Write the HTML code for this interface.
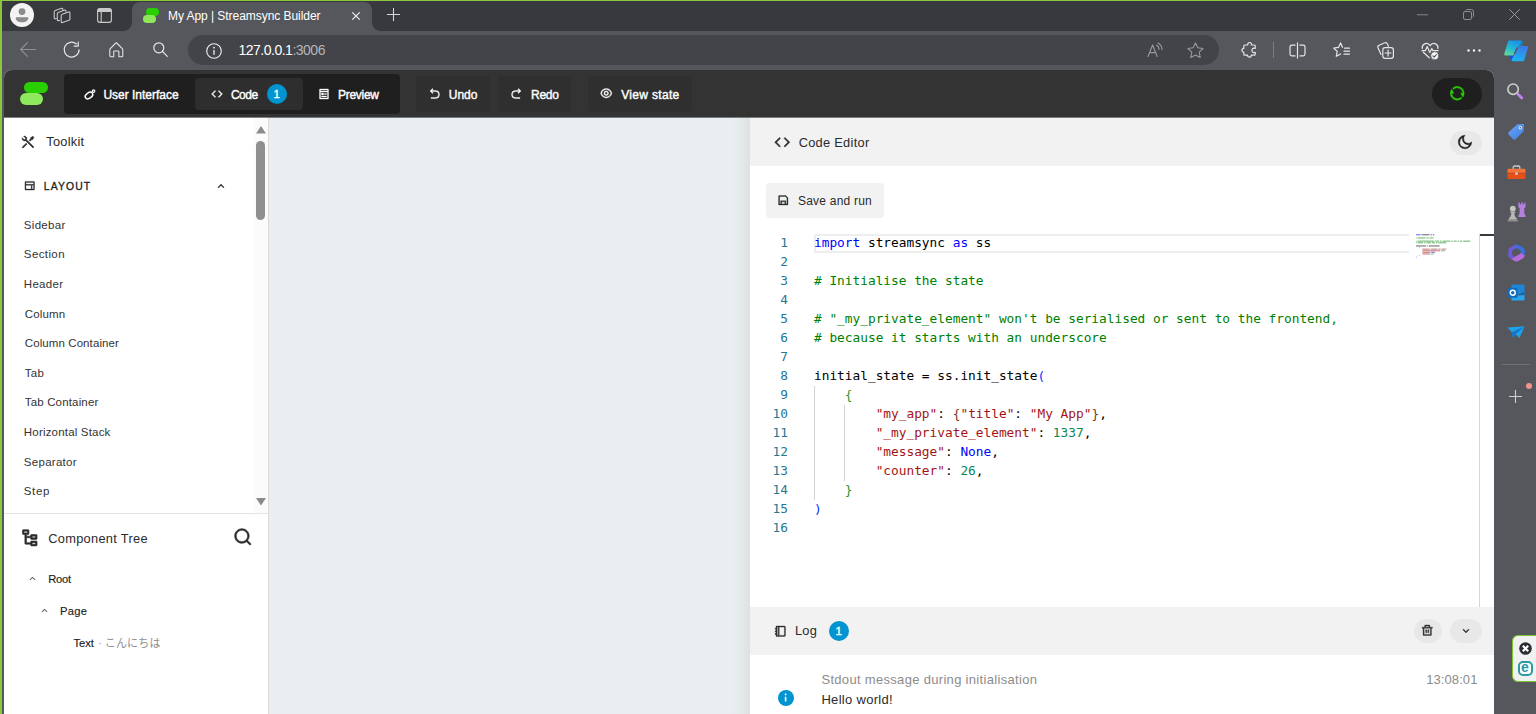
<!DOCTYPE html>
<html lang="en">
<head>
<meta charset="utf-8">
<title>My App | Streamsync Builder</title>
<style>
*{box-sizing:border-box;margin:0;padding:0}
html,body{width:1536px;height:714px;overflow:hidden}
body{position:relative;background:#8cc63f;font-family:"Liberation Sans","Noto Sans CJK JP",sans-serif;font-size:12px;color:#000}
.abs{position:absolute}
svg{display:block;overflow:visible}
/* ---------- browser chrome ---------- */
#chrome{position:absolute;left:2px;top:1px;width:1534px;height:713px;background:#56575c}
#tabbar{position:absolute;left:0;top:0;width:1534px;height:30px;background:#38393d}
#tab{position:absolute;left:130px;top:1px;width:240px;height:29px;background:#56575c;border-radius:8px 8px 0 0}
#tab:before,#tab:after{content:"";position:absolute;bottom:0;width:8px;height:8px}
#tab:before{left:-8px;background:radial-gradient(circle at 0 0,transparent 7.5px,#56575c 8px)}
#tab:after{right:-8px;background:radial-gradient(circle at 100% 0,transparent 7.5px,#56575c 8px)}
#tabtitle{position:absolute;left:166px;top:6.5px;font-size:12px;line-height:16px;color:#fff;white-space:nowrap;letter-spacing:-.05px}
#urlpill{position:absolute;left:186px;top:34px;width:1031px;height:30px;border-radius:15px;background:#434449}
#url{position:absolute;left:236.5px;top:41px;font-size:14px;line-height:16px;color:#fff;white-space:nowrap;letter-spacing:-.5px}
#url span{color:#b4b5b8}
/* ---------- app ---------- */
#app{position:absolute;left:4px;top:70px;width:1490px;height:644px;border-radius:8px 8px 0 0;overflow:hidden;background:#e9eef1}
#pc{position:absolute;left:-4px;top:-70px;width:1536px;height:714px}
#pc div,#pc svg{position:absolute}
#pc .tx{white-space:nowrap;line-height:1}
#pc span{position:static}
#topbar{left:4px;top:70px;width:1490px;height:47px;background:#333}
#tbedge{left:4px;top:117px;width:1490px;height:1px;background:linear-gradient(90deg,#808080 0,#808080 265px,#767879 265px,#767879 746px,#7a7a7a 746px)}
#modegroup{left:64px;top:74px;width:336px;height:40px;background:#1f1f1f;border-radius:4px}
.tbtn{border-radius:4px;background:#2f2f2f}
#left{left:4px;top:118px;width:265px;height:596px;background:#fff;border-right:1px solid #d9d9d9}
#strack{left:253px;top:118px;width:15px;height:395px;background:#fbfbfb}
#sthumb{left:256px;top:141px;width:9px;height:79px;border-radius:4.5px;background:#8f8f8f}
#ldiv{left:4px;top:513px;width:264px;height:1px;background:#e4e4e4}
#rshadow{left:732px;top:118px;width:18px;height:596px;background:linear-gradient(90deg,rgba(0,0,0,0),rgba(0,0,0,.02) 50%,rgba(0,0,0,.055))}
#right{left:750px;top:118px;width:744px;height:596px;background:#fff}
.phead{left:750px;width:744px;height:48px;background:#f2f2f2}
.pill{background:#e8e8e8;border-radius:12px;height:24px}
#savebtn{left:766px;top:183px;width:118px;height:35px;border-radius:4px;background:#f2f2f2}
.badge{width:20px;height:20px;border-radius:10px;background:#0094d1;color:#fff;font-size:11.5px;line-height:20px;text-align:center;-webkit-text-stroke:.35px #fff}
/* code */
#curline{left:814px;top:234px;width:595px;height:19px;border:2px solid #eee;border-right:none}
#code{left:814px;top:233.3px;font-family:"DejaVu Sans Mono","Liberation Mono",monospace;font-size:12.8px;line-height:19px;white-space:pre;color:#000}
#lnum{left:750px;top:233.3px;width:38px;text-align:right;font-family:"DejaVu Sans Mono","Liberation Mono",monospace;font-size:12.8px;line-height:19px;color:#237893;white-space:pre}
#code div,#lnum div{position:static}
.k{color:#00f}.c{color:#008000}.s{color:#a31515}.n{color:#098658}.b1{color:#0431fa}.b2{color:#319331}.b3{color:#7b3814}
.guide{width:1px;background:#d3d3d3}
#ruler{left:1479px;top:234px;width:1px;height:373px;background:#d6d6d6}
#rulercur{left:1480px;top:234px;width:14px;height:2px;background:#3a3a3a}

</style>
</head>
<body>
<div id="chrome">
  <div id="tabbar"></div>
  <div id="tab"></div>
  <!-- profile -->
  <svg class="abs" style="left:8px;top:2px" width="24" height="24" viewBox="0 0 24 24"><circle cx="12" cy="12" r="12" fill="#f3f3f3"/><circle cx="12" cy="8.6" r="3.4" fill="#8b8b8b"/><path d="M6.3 14.3h11.4a0.6 0.6 0 0 1 .6.6c0 2.6-2.8 4.3-6.3 4.3s-6.300-1.700-6.300-4.300a.6.6 0 0 1 .6-.6z" fill="#8b8b8b"/></svg>
  <!-- workspaces -->
  <svg class="abs" style="left:49px;top:3px" width="21" height="21" viewBox="0 0 21 21" fill="none" stroke="#c9c9cb" stroke-width="1.100" stroke-linejoin="round" stroke-linecap="round"><path d="M5.300 14.500 4.400 14.800a.9.900 0 0 1-1.200-.9V8a1.500 1.500 0 0 1 1-1.400l6.400-2.300a.9.900 0 0 1 1.200.9v1"/><path d="M8.500 16.300 7.500 16.600a.9.900 0 0 1-1.200-.9V9.800a1.500 1.500 0 0 1 1-1.400l6.400-2.300a.9.900 0 0 1 1.200.9v1"/><path d="M11.200 10.200l6.500-2.300a.9.900 0 0 1 1.200.9v6.100a1.500 1.500 0 0 1-1 1.400l-6.500 2.300a.9.900 0 0 1-1.200-.9v-6.100a1.500 1.500 0 0 1 1-1.400z"/></svg>
  <!-- tab actions -->
  <svg class="abs" style="left:94.500px;top:6.800px" width="15" height="15" viewBox="0 0 15 15" fill="none" stroke="#c9c9cb" stroke-width="1.100"><rect x=".6" y=".6" width="13.800" height="13.800" rx="2.300"/><path d="M4.200 3.600v10.800"/><path d="M.6 4V2.900A2.300 2.300 0 0 1 2.900.6h9.200a2.300 2.300 0 0 1 2.300 2.300V4z" fill="#c9c9cb" stroke="none"/></svg>
  <!-- favicon -->
  <div class="abs" style="left:144px;top:6.500px;width:13px;height:8px;border-radius:4px;background:#29cf00"></div>
  <div class="abs" style="left:141px;top:14px;width:13px;height:8px;border-radius:4px;background:#8ee85a"></div>
  <div id="tabtitle">My App | Streamsync Builder</div>
  <!-- tab close -->
  <svg class="abs" style="left:350px;top:11px" width="8" height="8" viewBox="0 0 8 8" fill="none" stroke="#f0f0f0" stroke-width="1.200"><path d="M.3.300l7.400 7.400M7.700.300L.3 7.700"/></svg>
  <!-- new tab -->
  <svg class="abs" style="left:384.500px;top:7px" width="13" height="13" viewBox="0 0 13 13" fill="none" stroke="#d6d6d8" stroke-width="1.100"><path d="M6.500 0v13M0 6.500h13"/></svg>
  <!-- window controls -->
  <svg class="abs" style="left:1415px;top:13px" width="11" height="2" viewBox="0 0 11 2"><path d="M0 .8h11" stroke="#85868a" stroke-width="1"/></svg>
  <svg class="abs" style="left:1461px;top:8px" width="11" height="11" viewBox="0 0 11 11" fill="none" stroke="#8b8c90" stroke-width="1"><rect x=".5" y="2.500" width="8" height="8" rx="1.500"/><path d="M2.700 1.300a1.500 1.500 0 0 1 1.300-.8h4.500a2 2 0 0 1 2 2v4.500a1.500 1.500 0 0 1-.8 1.300"/></svg>
  <svg class="abs" style="left:1507px;top:7.800px" width="11" height="11" viewBox="0 0 11 11" fill="none" stroke="#9a9b9f" stroke-width="1"><path d="M.3.300l10.400 10.400M10.700.300L.3 10.700"/></svg>
  <!-- nav icons -->
  <svg class="abs" style="left:18px;top:41px" width="16" height="15" viewBox="0 0 16 15" fill="none" stroke="#8f9094" stroke-width="1.100" stroke-linecap="round" stroke-linejoin="round"><path d="M15.500 7.500H.8M7.500.600L.6 7.500l6.900 6.900"/></svg>
  <svg class="abs" style="left:61.200px;top:39.800px" width="17.400" height="17.400" viewBox="0 0 17 17" fill="none" stroke="#e6e6e7" stroke-width="1.200" stroke-linecap="round" stroke-linejoin="round"><path d="M15.700 8.600a7.300 7.300 0 1 1-2.600-5.700"/><path d="M14.900 1v4h-4"/></svg>
  <svg class="abs" style="left:106.700px;top:40.700px" width="14.600" height="15.600" preserveAspectRatio="none" viewBox="0 0 16 16" fill="none" stroke="#e6e6e7" stroke-width="1.150" stroke-linejoin="round"><path d="M.9 7.300 7.200 1.300a1.200 1.200 0 0 1 1.600 0l6.300 6v6.800a1 1 0 0 1-1 1h-3.300v-5a.8.800 0 0 0-.8-.8H6a.8.800 0 0 0-.8.800v5H1.900a1 1 0 0 1-1-1z"/></svg>
  <svg class="abs" style="left:151px;top:41.300px" width="15" height="15" viewBox="0 0 15 15" fill="none" stroke="#e6e6e7" stroke-width="1.200" stroke-linecap="round"><circle cx="5.800" cy="5.800" r="5"/><path d="M9.500 9.500l4.800 4.800"/></svg>
  <div id="urlpill"></div>
  <svg class="abs" style="left:204px;top:41.500px" width="16" height="16" viewBox="0 0 16 16" fill="none" stroke="#f0f0f0" stroke-width="1.100"><circle cx="8" cy="8" r="7.300"/><path d="M8 7v4.800" stroke-width="1.300"/><circle cx="8" cy="4.700" r=".9" fill="#f0f0f0" stroke="none"/></svg>
  <div id="url">127.0.0.1<span>:3006</span></div>
  <!-- read aloud -->
  <svg class="abs" style="left:1145px;top:41px" width="18" height="16" viewBox="0 0 18 16" fill="none" stroke="#98999d" stroke-width="1.100" stroke-linecap="round" stroke-linejoin="round"><path d="M1 14.500 5.600 3l4.600 11.500M2.600 10.600h6"/><path d="M9.500 3.200a4.500 4.500 0 0 1 2.500 4.300M11 .9a7.500 7.500 0 0 1 4 6.700"/></svg>
  <!-- star -->
  <svg class="abs" style="left:1184.500px;top:41px" width="17" height="17" viewBox="0 0 17 17" fill="none" stroke="#98999d" stroke-width="1.100" stroke-linejoin="round"><path d="M8.500.9l2.300 4.900 5.300.7-3.900 3.700 1 5.300-4.700-2.600-4.700 2.600 1-5.300L.9 6.500l5.300-.7z"/></svg>
  <!-- extensions -->
  <svg class="abs" style="left:1238px;top:40px" width="17" height="18" viewBox="0 0 17 18" fill="none" stroke="#e6e6e7" stroke-width="1.200" stroke-linejoin="round"><path d="M4.800 4H7.800A1.900 1.900 0 1 1 11.400 4H14.200a1 1 0 0 1 1 1V7.500A2.200 2.200 0 1 0 15.200 11.300V13.200a1 1 0 0 1-1 1H11.300A1.900 1.900 0 1 1 7.500 14.200H4.800a1 1 0 0 1-1-1V11.200A1.900 1.900 0 1 1 3.800 7.400V5a1 1 0 0 1 1-1z"/></svg>
  <div class="abs" style="left:1270.500px;top:41px;width:1px;height:16px;background:#7c7d81"></div>
  <!-- split screen -->
  <svg class="abs" style="left:1286.500px;top:40.500px" width="17" height="17" viewBox="0 0 17 17" fill="none" stroke="#e6e6e7" stroke-width="1.200"><path d="M6.500 3.200H2.800a1.800 1.800 0 0 0-1.800 1.800v7a1.800 1.800 0 0 0 1.800 1.800h3.700M10.500 3.200h3.700a1.800 1.800 0 0 1 1.800 1.800v7a1.800 1.800 0 0 1-1.800 1.800h-3.700M8.500.5v16"/></svg>
  <!-- favorites -->
  <svg class="abs" style="left:1331px;top:41px" width="18" height="16" viewBox="0 0 18 16" fill="none" stroke="#e6e6e7" stroke-width="1.200" stroke-linejoin="round" stroke-linecap="round"><path d="M9.500 5.300 7.600.9 5.500 5.400l-4.800.6 3.500 3.400-.9 4.900 4.300-2.400"/><path d="M11.500 6.200h5M11 9.200h5.500M11 12.200h5.500"/></svg>
  <!-- collections -->
  <svg class="abs" style="left:1375px;top:40.500px" width="18" height="18" viewBox="0 0 18 18" fill="none" stroke="#e6e6e7" stroke-width="1.200" stroke-linejoin="round" stroke-linecap="round"><path d="M4 12.500 1 5.800a2 2 0 0 1 1.100-2.600l5.700-2.400a2 2 0 0 1 2.600 1.100l1 2.400"/><rect x="5.800" y="5.700" width="10.600" height="10.600" rx="2.300"/><path d="M11.100 8v6M8.100 11h6"/></svg>
  <!-- browser essentials -->
  <svg class="abs" style="left:1418.500px;top:41px" width="19" height="18" viewBox="0 0 19 18" fill="none" stroke="#e6e6e7" stroke-width="1.200" stroke-linejoin="round" stroke-linecap="round"><path d="M1.300 6.300a4.100 4.100 0 0 1 7.200-3.300l.6.700.6-.7a4.100 4.100 0 0 1 7.200 3.300"/><path d="M2.300 10.200l6 5.600"/><path d="M.9 8.600h3.600l1.700-4 2.600 6 2-4.200 1 2.200h5.400"/><circle cx="13.700" cy="13.700" r="3.900" fill="#f4f4f4" stroke="#56575c" stroke-width=".6"/><path d="M11.900 13.800l1.300 1.300 2.300-2.600" stroke="#56575c" stroke-width="1.100"/></svg>
  <!-- more -->
  <svg class="abs" style="left:1465px;top:48px" width="14" height="3" viewBox="0 0 14 3" fill="#f0f0f0"><circle cx="1.500" cy="1.500" r="1.200"/><circle cx="7" cy="1.500" r="1.200"/><circle cx="12.500" cy="1.500" r="1.200"/></svg>
  <!-- copilot -->
  <svg class="abs" style="left:1501.900px;top:38.600px" width="24.200" height="21.700" viewBox="0 0 24.200 21.700">
    <defs>
      <linearGradient id="cpa" x1=".7" y1="0" x2=".2" y2="1"><stop offset="0" stop-color="#1b96e6"/><stop offset=".55" stop-color="#25b9d8"/><stop offset="1" stop-color="#56d69a"/></linearGradient>
      <linearGradient id="cpb" x1=".6" y1="0" x2=".3" y2="1"><stop offset="0" stop-color="#3a7de8"/><stop offset="1" stop-color="#1cb0f2"/></linearGradient>
    </defs>
    <path d="M14.500 1.500h3.300l-.8 5.500h-2.500z" fill="#1a7fae" stroke="#1a7fae" stroke-width="2" stroke-linejoin="round"/>
    <path d="M6 16h6l-2.200 4.200H8.300z" fill="#1c50d2" stroke="#1c50d2" stroke-width="2" stroke-linejoin="round"/>
    <path d="M5.300 1.800h10.600l-7 12.400H1.500z" fill="url(#cpa)" stroke="url(#cpa)" stroke-width="2.600" stroke-linejoin="round"/>
    <path d="M16.400 7.400h6.400l-3.800 12.500H8.800z" fill="url(#cpb)" stroke="url(#cpb)" stroke-width="2.600" stroke-linejoin="round"/>
    <path d="M12.300 7.500l1.500-.5-2.600 7-1.600.3z" fill="#56575c"/>
  </svg>
  <!-- sidebar search -->
  <svg class="abs" style="left:1504px;top:81px" width="18" height="18" viewBox="0 0 18 18" fill="none" stroke-linecap="round"><circle cx="7.100" cy="7.200" r="5.200" stroke="#cfcfcf" stroke-width="1.600"/><path d="M12 12.300l3.800 3.600" stroke="#c383ec" stroke-width="2.800"/></svg>
  <div id="edgebar"></div>
  <!-- edge sidebar icons (coords relative to #chrome: page x-2, y-1) -->
  <svg class="abs" style="left:1505px;top:122px" width="18" height="18" viewBox="0 0 18 18"><defs><linearGradient id="tg" x1="0" y1="0" x2="1" y2="1"><stop offset="0" stop-color="#6aa6f5"/><stop offset="1" stop-color="#3f7fe0"/></linearGradient></defs><path d="M10.800 1.300 16 1.100a1 1 0 0 1 1 1l-.2 5.200a2 2 0 0 1-.6 1.300l-7.600 7.600a1.600 1.600 0 0 1-2.300 0L1.700 11.600a1.600 1.600 0 0 1 0-2.300l7.800-7.400a2 2 0 0 1 1.300-.6z" fill="url(#tg)"/><circle cx="13.300" cy="4.700" r="1.700" fill="#e8eefc"/><circle cx="13.300" cy="4.700" r=".8" fill="#56575c"/></svg>
  <svg class="abs" style="left:1504.500px;top:164px" width="19" height="15" viewBox="0 0 19 15"><path d="M6.200 4V2.300A1.300 1.300 0 0 1 7.500 1h4a1.300 1.300 0 0 1 1.300 1.300V4" fill="none" stroke="#c9c9c9" stroke-width="1.300"/><path d="M1.500 3.800h16a1 1 0 0 1 1 1V8H.5V4.800a1 1 0 0 1 1-1z" fill="#f4733a"/><path d="M.5 8h18v5a1 1 0 0 1-1 1h-16a1 1 0 0 1-1-1z" fill="#e4501b"/><rect x=".5" y="7.700" width="18" height=".8" fill="#c33f10"/><circle cx="9.500" cy="8.600" r="1.500" fill="#c8c8c8"/></svg>
  <svg class="abs" style="left:1505px;top:201px" width="19" height="20" viewBox="0 0 19 20"><path d="M11.300.6h1.600v1.600h1.400V.6h1.600v1.600h1.400V.6h1.300v4.300l-1.300 1.300v5.300l1.300 2.300v1.300h-7.300v-1.300l1.300-2.300V6.200l-1.300-1.300z" fill="#b47fdd"/><circle cx="5.800" cy="6.600" r="2.900" fill="#c4c4c4"/><path d="M3.400 9.600h4.800v1.300H7.300c0 2.300.8 4 2.400 5.300v1.500H1.900v-1.500c1.600-1.300 2.400-3 2.400-5.300H3.400z" fill="#b8b8b8"/><rect x=".6" y="17.500" width="10.500" height="1.900" rx=".9" fill="#8e8e8e"/></svg>
  <svg class="abs" style="left:1505.500px;top:242.500px" width="17" height="18" viewBox="0 0 17 18"><path d="M8.500.5c.7 0 1.300.2 1.900.5l4.400 2.500c1.200.7 1.900 1.900 1.900 3.300v4.500l-4-2.200V7.300c0-.5-.3-1-.7-1.200L6.200 2.800 6.600 1c.6-.3 1.200-.5 1.900-.5z" fill="#3572e0"/><path d="M6.600 1 2.200 3.500C1 4.200.3 5.400.3 6.800v4.400c0 1.400.7 2.600 1.900 3.300l.9.500 3.600-2.200-1.800-1c-.4-.3-.7-.7-.7-1.200V7.300c0-.5.300-1 .7-1.200l4.700-2.700C9 2.500 7.800 1.400 6.600 1z" fill="#6a5bd8"/><path d="M16.700 11.300c0 1.300-.7 2.500-1.900 3.200L10.400 17c-1.200.7-2.600.7-3.800 0l-3.500-2 8.900-5.100c.4-.3.700-.7.700-1.200z" fill="#b56bdc"/></svg>
  <svg class="abs" style="left:1506px;top:283px" width="17" height="17" viewBox="0 0 17 17"><path d="M4.500.5h11a1 1 0 0 1 1 1V8l-6 2-7-2V1.500a1 1 0 0 1 1-1z" fill="#1c86d8"/><path d="M3.500 8l6.500 3.500L16.500 8v7.500a1 1 0 0 1-1 1h-11a1 1 0 0 1-1-1z" fill="#2aa7ec"/><path d="M10 11.500 16.500 8v3z" fill="#0f5fae"/><rect x="0" y="3.800" width="9.500" height="10" rx="1" fill="#0f6cbd"/><circle cx="4.750" cy="8.800" r="2.500" fill="none" stroke="#fff" stroke-width="1.400"/></svg>
  <svg class="abs" style="left:1505px;top:325px" width="18" height="13" viewBox="0 0 18 13"><path d="M.3 1.600 17.600.3 12.500 12 8.600 8.300 5.400 11.400 4.800 6.200z" fill="#1fa2ea"/><path d="M4.800 6.200 17.600.3 8.600 8.300 5.400 11.400z" fill="#1577c9"/></svg>
  <div class="abs" style="left:1499.500px;top:363px;width:28.500px;height:1px;background:#707175"></div>
  <svg class="abs" style="left:1506.500px;top:388.500px" width="13" height="13" viewBox="0 0 13 13" fill="none" stroke="#cfcfd1" stroke-width="1.100"><path d="M6.500 0v13M0 6.500h13"/></svg>
  <div class="abs" style="left:1523.500px;top:381.500px;width:6.500px;height:6.500px;border-radius:50%;background:#f1948c"></div>
  <!-- antivirus badge -->
  <div class="abs" style="left:1510px;top:633.500px;width:26px;height:47px;border:1.800px solid #7dc62f;border-right:none;border-radius:6px 0 0 6px;background:#f1f1f1"></div>
  <svg class="abs" style="left:1516.500px;top:641px" width="13" height="13" viewBox="0 0 13 13"><circle cx="6.500" cy="6.500" r="6.300" fill="#2a2e35"/><path d="M3.800 3.800l5.400 5.400M9.200 3.800 3.800 9.200" stroke="#fff" stroke-width="2.200"/></svg>
  <div class="abs" style="left:1515.500px;top:660px;width:15px;height:15px;border:2px solid #2a9aa6;border-radius:5px;background:#fff;color:#2a9aa6;font-size:14px;font-weight:bold;line-height:9px;text-align:center">e</div>
</div>

<div id="app"><div id="pc">
  <div id="topbar"></div>
  <!-- logo -->
  <div style="left:24px;top:81.500px;width:23.500px;height:11.700px;border-radius:6px;background:#29cf00"></div>
  <div style="left:20px;top:93.200px;width:23px;height:11.700px;border-radius:6px;background:#8fe95c"></div>
  <div id="modegroup"></div>
  <div class="tbtn" style="left:195px;top:78px;width:108px;height:32px;background:#2e2e2e"></div>
  <div class="tbtn" style="left:416px;top:76px;width:74px;height:36px"></div>
  <div class="tbtn" style="left:498px;top:76px;width:73px;height:36px"></div>
  <div class="tbtn" style="left:588px;top:76px;width:104px;height:36px"></div>
  <div class="badge" style="left:266.600px;top:84px">1</div>
  <div style="left:1432px;top:77.500px;width:50px;height:32px;border-radius:16px;background:#1f1f1f"></div>
  <!-- panels -->
  <div id="left"></div>
  <div id="strack"></div>
  <div id="sthumb"></div>
  <svg style="left:255.600px;top:126px" width="10" height="7.500" viewBox="0 0 10 7.500"><path d="M5 0l5 7.500H0z" fill="#8b8b8b"/></svg>
  <svg style="left:255.600px;top:498px" width="10" height="7.500" viewBox="0 0 10 7.500"><path d="M0 0h10L5 7.500z" fill="#8b8b8b"/></svg>
  <div id="ldiv"></div>
  <div id="rshadow"></div>
  <div id="right"></div>
  <div class="phead" style="top:118px"></div>
  <div class="phead" style="top:607px"></div>
  <div class="pill" style="left:1450px;top:130.500px;width:31.500px"></div>
  <div class="pill" style="left:1413.500px;top:618.500px;width:28px"></div>
  <div class="pill" style="left:1449.500px;top:618.500px;width:32px"></div>
  <div id="savebtn"></div>
  <div class="badge" style="left:828.800px;top:621.200px">1</div>
  <div style="left:777.500px;top:689.500px;width:16px;height:16px;border-radius:8px;background:#0094d1"></div>
  <!-- code editor -->
  <div id="curline"></div>
  <div class="guide" style="left:814px;top:386px;height:114px"></div>
  <div class="guide" style="left:844px;top:405px;height:76px"></div>
  <div id="lnum"><div>1</div><div>2</div><div>3</div><div>4</div><div>5</div><div>6</div><div>7</div><div>8</div><div>9</div><div>10</div><div>11</div><div>12</div><div>13</div><div>14</div><div>15</div><div>16</div></div>
  <div id="code"><div><span class="k">import</span> streamsync <span class="k">as</span> ss</div><div> </div><div class="c"># Initialise the state</div><div> </div><div class="c"># "_my_private_element" won't be serialised or sent to the frontend,</div><div class="c"># because it starts with an underscore</div><div> </div><div>initial_state = ss.init_state<span class="b1">(</span></div><div>    <span class="b2">{</span></div><div>        <span class="s">"my_app"</span>: <span class="b3">{</span><span class="s">"title"</span>: <span class="s">"My App"</span><span class="b3">}</span>,</div><div>        <span class="s">"_my_private_element"</span>: <span class="n">1337</span>,</div><div>        <span class="s">"message"</span>: <span class="k">None</span>,</div><div>        <span class="s">"counter"</span>: <span class="n">26</span>,</div><div>    <span class="b2">}</span></div><div><span class="b1">)</span></div><div> </div></div>
  <div id="ruler"></div>
  <div id="rulercur"></div>
<svg style="left:84px;top:88.500px" width="12" height="11" viewBox="0 0 12 11" fill="none" stroke="#fff"><ellipse cx="5" cy="6.500" rx="4.100" ry="2.700" transform="rotate(-35 5 6.500)" stroke-width="1.500"/><circle cx="9.600" cy="2.100" r="1.250" stroke-width="1.100"/></svg>
<div id="tbedge"></div>
<svg style="left:210.70px;top:88.00px" width="12.00" height="12.00" viewBox="0 0 24 24"><path d="M23 12l-7.071 7.071-1.414-1.414L20.172 12l-5.657-5.657L15.929 4.929 23 12zM3.828 12l5.657 5.657-1.414 1.414L1 12l7.071-7.071 1.414 1.414L3.828 12z" fill="#fff" stroke="#fff" stroke-width=".7"/></svg>
<svg style="left:318.20px;top:88.00px" width="12.00" height="12.00" viewBox="0 0 24 24"><path d="M5 8v12h14V8H5zm0-2h14V4H5v2zm15 16H4a1 1 0 0 1-1-1V3a1 1 0 0 1 1-1h16a1 1 0 0 1 1 1v18a1 1 0 0 1-1 1zM7 10h4v4H7v-4zm0 6h10v2H7v-2zm6-5h4v2h-4v-2z" fill="#fff" stroke="#fff" stroke-width=".7"/></svg>
<svg style="left:428.55px;top:88.29px" width="12.00" height="12.00" viewBox="0 0 24 24"><path d="M5.828 7l2.536 2.536L6.950 10.950 2 6l4.950-4.950 1.414 1.414L5.828 5H13a8 8 0 1 1 0 16H4v-2h9a6 6 0 1 0 0-12H5.828z" fill="#fff" stroke="#fff" stroke-width=".7"/></svg>
<svg style="left:509.95px;top:88.29px" width="12.00" height="12.00" viewBox="0 0 24 24"><path d="M18.172 7H11a6 6 0 1 0 0 12h9v2h-9a8 8 0 1 1 0-16h7.172l-2.536-2.536L17.050 1.050 22 6l-4.950 4.950-1.414-1.414L18.172 7z" fill="#fff" stroke="#fff" stroke-width=".7"/></svg>
<svg style="left:599.65px;top:87.45px" width="12.50" height="12.50" viewBox="0 0 24 24"><path d="M12 3c5.392 0 9.878 3.880 10.819 9-.940 5.120-5.427 9-10.819 9-5.392 0-9.878-3.880-10.819-9C2.121 6.880 6.608 3 12 3zm0 16a9.005 9.005 0 0 0 8.777-7 9.005 9.005 0 0 0-17.554 0A9.005 9.005 0 0 0 12 19zm0-2.500a4.500 4.500 0 1 1 0-9 4.500 4.500 0 0 1 0 9zm0-2a2.500 2.500 0 1 0 0-5 2.500 2.500 0 0 0 0 5z" fill="#fff" stroke="#fff" stroke-width=".7"/></svg>
<svg style="left:1448.75px;top:85.25px" width="16.50" height="16.50" viewBox="0 0 24 24"><path d="M5.463 4.433A9.961 9.961 0 0 1 12 2c5.523 0 10 4.477 10 10 0 2.136-.670 4.116-1.810 5.740L17 12h3A8 8 0 0 0 6.460 6.228l-.997-1.795zm13.074 15.134A9.961 9.961 0 0 1 12 22C6.477 22 2 17.523 2 12c0-2.136.670-4.116 1.810-5.740L7 12H4a8 8 0 0 0 13.540 5.772l.997 1.795z" fill="#29cf00" stroke="#29cf00" stroke-width=".7"/></svg>
<svg style="left:20.47px;top:133.52px" width="16.50" height="16.50" viewBox="0 0 24 24"><path d="M5.330 3.271a3.500 3.500 0 0 1 4.254 4.963l10.709 10.710-1.414 1.414-10.710-10.710a3.502 3.502 0 0 1-4.962-4.255L5.444 7.630a1.500 1.500 0 1 0 2.121-2.121L5.329 3.270zm10.367 1.884l3.182-1.768 1.414 1.414-1.768 3.182-1.768.354-2.120 2.121-1.415-1.414 2.121-2.121.354-1.768zm-6.718 8.132l1.414 1.414-5.303 5.303a1 1 0 0 1-1.492-1.327l.078-.087 5.303-5.303z" fill="#2b2b2b" stroke="#2b2b2b" stroke-width=".7"/></svg>
<svg style="left:23.65px;top:180.15px" width="11.50" height="11.50" viewBox="0 0 24 24"><path d="M3 21a1 1 0 0 1-1-1V4a1 1 0 0 1 1-1h18a1 1 0 0 1 1 1v16a1 1 0 0 1-1 1H3zm12-10H4v8h11v-8zm5 0h-3v8h3v-8zm0-6H4v4h16V5z" fill="#2b2b2b" stroke="#2b2b2b" stroke-width=".7"/></svg>
<svg style="left:215.40px;top:179.66px" width="12.00" height="12.00" viewBox="0 0 24 24"><path d="M12 10.828l-4.950 4.950-1.414-1.414L12 8l6.364 6.364-1.414 1.414z" fill="#2b2b2b" stroke="#2b2b2b" stroke-width=".7"/></svg>
<svg style="left:20.05px;top:527.65px" width="19.50" height="19.50" viewBox="0 0 24 24"><path d="M10 2a1 1 0 0 1 1 1v4a1 1 0 0 1-1 1H8v2h5V9a1 1 0 0 1 1-1h6a1 1 0 0 1 1 1v4a1 1 0 0 1-1 1h-6a1 1 0 0 1-1-1v-1H8v6h5v-1a1 1 0 0 1 1-1h6a1 1 0 0 1 1 1v4a1 1 0 0 1-1 1h-6a1 1 0 0 1-1-1v-1H7a1 1 0 0 1-1-1V8H4a1 1 0 0 1-1-1V3a1 1 0 0 1 1-1h6zm9 16h-4v2h4v-2zm0-8h-4v2h4v-2zM9 4H5v2h4V4z" fill="#2b2b2b" stroke="#2b2b2b" stroke-width=".7"/></svg>
<svg style="left:232.82px;top:527.22px" width="19.50" height="19.50" viewBox="0 0 24 24"><path d="M18.031 16.617l4.283 4.282-1.415 1.415-4.282-4.283A8.960 8.960 0 0 1 11 20c-4.968 0-9-4.032-9-9s4.032-9 9-9 9 4.032 9 9a8.960 8.960 0 0 1-1.969 5.617zm-2.006-.742A6.977 6.977 0 0 0 18 11c0-3.868-3.133-7-7-7-3.868 0-7 3.132-7 7 0 3.867 3.132 7 7 7a6.977 6.977 0 0 0 4.875-1.975l.15-.15z" fill="#2b2b2b" stroke="#2b2b2b" stroke-width=".7"/></svg>
<svg style="left:26.70px;top:572.55px" width="11.00" height="11.00" viewBox="0 0 24 24"><path d="M12 10.828l-4.950 4.950-1.414-1.414L12 8l6.364 6.364-1.414 1.414z" fill="#5a5a5a"/></svg>
<svg style="left:39.00px;top:604.55px" width="11.00" height="11.00" viewBox="0 0 24 24"><path d="M12 10.828l-4.950 4.950-1.414-1.414L12 8l6.364 6.364-1.414 1.414z" fill="#5a5a5a"/></svg>
<svg style="left:773.75px;top:134.35px" width="16.50" height="16.50" viewBox="0 0 24 24"><path d="M23 12l-7.071 7.071-1.414-1.414L20.172 12l-5.657-5.657L15.929 4.929 23 12zM3.828 12l5.657 5.657-1.414 1.414L1 12l7.071-7.071 1.414 1.414L3.828 12z" fill="#2b2b2b" stroke="#2b2b2b" stroke-width=".7"/></svg>
<svg style="left:777.15px;top:193.65px" width="12.50" height="12.50" viewBox="0 0 24 24"><path d="M7 19v-6h10v6h2V7.828L16.172 5H5v14h2zM4 3h13l4 4v13a1 1 0 0 1-1 1H4a1 1 0 0 1-1-1V4a1 1 0 0 1 1-1zm5 12v4h6v-4H9z" fill="#2b2b2b" stroke="#2b2b2b" stroke-width=".7"/></svg>
<svg style="left:1457.20px;top:134.40px" width="16.00" height="16.00" viewBox="0 0 24 24"><path d="M10 7a7 7 0 0 0 12 4.900v.100c0 5.523-4.477 10-10 10S2 17.523 2 12 6.477 2 12 2h.100A6.979 6.979 0 0 0 10 7zm-6 5a8 8 0 0 0 15.062 3.762A9 9 0 0 1 8.238 4.938 7.999 7.999 0 0 0 4 12z" fill="#1c1c1c" stroke="#1c1c1c" stroke-width=".7"/></svg>
<svg style="left:773.75px;top:624.95px" width="12.50" height="12.50" viewBox="0 0 24 24"><path d="M20.005 2C21.107 2 22 2.898 22 3.990v16.020c0 1.099-.893 1.990-1.995 1.990H4v-4H2v-2h2v-3H2v-2h2V8H2V6h2V2h16.005zM8 4H6v16h2V4zm12 0H10v16h10V4z" fill="#2b2b2b" stroke="#2b2b2b" stroke-width=".7"/></svg>
<svg style="left:1421.15px;top:624.35px" width="12.50" height="12.50" viewBox="0 0 24 24"><path d="M17 6h5v2h-2v13a1 1 0 0 1-1 1H5a1 1 0 0 1-1-1V8H2V6h5V3a1 1 0 0 1 1-1h8a1 1 0 0 1 1 1v3zm1 2H6v12h12V8zm-9 3h2v6H9v-6zm4 0h2v6h-2v-6zM9 4v2h6V4H9z" fill="#2b2b2b" stroke="#2b2b2b" stroke-width=".7"/></svg>
<svg style="left:1459.60px;top:624.65px" width="12.00" height="12.00" viewBox="0 0 24 24"><path d="M12 13.172l4.950-4.950 1.414 1.414L12 16 5.636 9.636 7.050 8.222z" fill="#2b2b2b" stroke="#2b2b2b" stroke-width=".7"/></svg>
<svg style="left:775.90px;top:687.90px" width="19.20" height="19.20" viewBox="0 0 24 24"><path d="M11 11v6h2v-6h-2zm0-4v2h2V7h-2z" fill="#fff"/></svg>
<svg style="left:1416px;top:233.8px" width="60" height="28" viewBox="0 0 60 28"><rect x="0.00" y="0.20" width="4.65" height="1.1" fill="#00f" opacity=".55"/><rect x="5.60" y="0.20" width="7.85" height="1.1" fill="#000" opacity=".55"/><rect x="14.40" y="0.20" width="1.45" height="1.1" fill="#00f" opacity=".55"/><rect x="16.80" y="0.20" width="1.45" height="1.1" fill="#000" opacity=".55"/><rect x="0.00" y="3.40" width="0.65" height="1.1" fill="#008000" opacity=".55"/><rect x="1.60" y="3.40" width="7.85" height="1.1" fill="#008000" opacity=".55"/><rect x="10.40" y="3.40" width="2.25" height="1.1" fill="#008000" opacity=".55"/><rect x="13.60" y="3.40" width="3.85" height="1.1" fill="#008000" opacity=".55"/><rect x="0.00" y="6.60" width="0.65" height="1.1" fill="#008000" opacity=".55"/><rect x="1.60" y="6.60" width="16.65" height="1.1" fill="#008000" opacity=".55"/><rect x="19.20" y="6.60" width="3.85" height="1.1" fill="#008000" opacity=".55"/><rect x="24.00" y="6.60" width="1.45" height="1.1" fill="#008000" opacity=".55"/><rect x="26.40" y="6.60" width="7.85" height="1.1" fill="#008000" opacity=".55"/><rect x="35.20" y="6.60" width="1.45" height="1.1" fill="#008000" opacity=".55"/><rect x="37.60" y="6.60" width="3.05" height="1.1" fill="#008000" opacity=".55"/><rect x="41.60" y="6.60" width="1.45" height="1.1" fill="#008000" opacity=".55"/><rect x="44.00" y="6.60" width="2.25" height="1.1" fill="#008000" opacity=".55"/><rect x="47.20" y="6.60" width="7.05" height="1.1" fill="#008000" opacity=".55"/><rect x="0.00" y="8.20" width="0.65" height="1.1" fill="#008000" opacity=".55"/><rect x="1.60" y="8.20" width="5.45" height="1.1" fill="#008000" opacity=".55"/><rect x="8.00" y="8.20" width="1.45" height="1.1" fill="#008000" opacity=".55"/><rect x="10.40" y="8.20" width="4.65" height="1.1" fill="#008000" opacity=".55"/><rect x="16.00" y="8.20" width="3.05" height="1.1" fill="#008000" opacity=".55"/><rect x="20.00" y="8.20" width="1.45" height="1.1" fill="#008000" opacity=".55"/><rect x="22.40" y="8.20" width="7.85" height="1.1" fill="#008000" opacity=".55"/><rect x="0.00" y="11.40" width="10.25" height="1.1" fill="#000" opacity=".55"/><rect x="11.20" y="11.40" width="0.65" height="1.1" fill="#000" opacity=".55"/><rect x="12.80" y="11.40" width="10.25" height="1.1" fill="#000" opacity=".55"/><rect x="23.20" y="11.40" width="0.65" height="1.1" fill="#0431fa" opacity=".55"/><rect x="3.20" y="13.00" width="0.65" height="1.1" fill="#319331" opacity=".55"/><rect x="6.40" y="14.60" width="6.25" height="1.1" fill="#a31515" opacity=".55"/><rect x="12.80" y="14.60" width="0.65" height="1.1" fill="#000" opacity=".55"/><rect x="14.40" y="14.60" width="0.65" height="1.1" fill="#7b3814" opacity=".55"/><rect x="15.20" y="14.60" width="5.45" height="1.1" fill="#a31515" opacity=".55"/><rect x="20.80" y="14.60" width="0.65" height="1.1" fill="#000" opacity=".55"/><rect x="22.40" y="14.60" width="2.25" height="1.1" fill="#a31515" opacity=".55"/><rect x="25.60" y="14.60" width="3.05" height="1.1" fill="#a31515" opacity=".55"/><rect x="28.80" y="14.60" width="0.65" height="1.1" fill="#7b3814" opacity=".55"/><rect x="29.60" y="14.60" width="0.65" height="1.1" fill="#000" opacity=".55"/><rect x="6.40" y="16.20" width="16.65" height="1.1" fill="#a31515" opacity=".55"/><rect x="23.20" y="16.20" width="0.65" height="1.1" fill="#000" opacity=".55"/><rect x="24.80" y="16.20" width="3.05" height="1.1" fill="#098658" opacity=".55"/><rect x="28.00" y="16.20" width="0.65" height="1.1" fill="#000" opacity=".55"/><rect x="6.40" y="17.80" width="7.05" height="1.1" fill="#a31515" opacity=".55"/><rect x="13.60" y="17.80" width="0.65" height="1.1" fill="#000" opacity=".55"/><rect x="15.20" y="17.80" width="3.05" height="1.1" fill="#00f" opacity=".55"/><rect x="18.40" y="17.80" width="0.65" height="1.1" fill="#000" opacity=".55"/><rect x="6.40" y="19.40" width="7.05" height="1.1" fill="#a31515" opacity=".55"/><rect x="13.60" y="19.40" width="0.65" height="1.1" fill="#000" opacity=".55"/><rect x="15.20" y="19.40" width="1.45" height="1.1" fill="#098658" opacity=".55"/><rect x="16.80" y="19.40" width="0.65" height="1.1" fill="#000" opacity=".55"/><rect x="3.20" y="21.00" width="0.65" height="1.1" fill="#319331" opacity=".55"/><rect x="0.00" y="22.60" width="0.65" height="1.1" fill="#0431fa" opacity=".55"/></svg>
<div class="tx" id="t_ui" style="left:103.42px;top:89.00px;font-size:12px;letter-spacing:-0.007px;color:#fff;-webkit-text-stroke:.4px #fff;">User Interface</div>
<div class="tx" id="t_code" style="left:230.95px;top:89.00px;font-size:12px;letter-spacing:-0.480px;color:#fff;-webkit-text-stroke:.4px #fff;">Code</div>
<div class="tx" id="t_prev" style="left:338.00px;top:89.00px;font-size:12px;letter-spacing:-0.285px;color:#fff;-webkit-text-stroke:.4px #fff;">Preview</div>
<div class="tx" id="t_undo" style="left:448.74px;top:89.00px;font-size:12px;letter-spacing:0.000px;color:#fff;-webkit-text-stroke:.4px #fff;">Undo</div>
<div class="tx" id="t_redo" style="left:531.00px;top:89.00px;font-size:12px;letter-spacing:-0.270px;color:#fff;-webkit-text-stroke:.4px #fff;">Redo</div>
<div class="tx" id="t_view" style="left:621.27px;top:89.00px;font-size:12px;letter-spacing:0.320px;color:#fff;-webkit-text-stroke:.4px #fff;">View state</div>
<div class="tx" id="t_toolkit" style="left:46.32px;top:136.01px;font-size:12.8px;letter-spacing:0.240px;color:#2b2b2b;">Toolkit</div>
<div class="tx" id="t_layout" style="left:43.79px;top:182.00px;font-size:10.4px;letter-spacing:1.116px;color:#222;-webkit-text-stroke:.3px #222;">LAYOUT</div>
<div class="tx" id="t_it0" style="left:23.84px;top:220.00px;font-size:11.5px;letter-spacing:0.300px;color:#333;">Sidebar</div>
<div class="tx" id="t_it1" style="left:23.84px;top:249.01px;font-size:11.5px;letter-spacing:0.390px;color:#333;">Section</div>
<div class="tx" id="t_it2" style="left:23.84px;top:279.00px;font-size:11.5px;letter-spacing:0.288px;color:#333;">Header</div>
<div class="tx" id="t_it3" style="left:24.74px;top:309.01px;font-size:11.5px;letter-spacing:0.144px;color:#333;">Column</div>
<div class="tx" id="t_it4" style="left:24.74px;top:338.00px;font-size:11.5px;letter-spacing:0.096px;color:#333;">Column Container</div>
<div class="tx" id="t_it5" style="left:24.74px;top:368.01px;font-size:11.5px;letter-spacing:0.315px;color:#333;">Tab</div>
<div class="tx" id="t_it6" style="left:24.74px;top:397.00px;font-size:11.5px;letter-spacing:0.165px;color:#333;">Tab Container</div>
<div class="tx" id="t_it7" style="left:23.84px;top:427.00px;font-size:11.5px;letter-spacing:0.186px;color:#333;">Horizontal Stack</div>
<div class="tx" id="t_it8" style="left:23.84px;top:457.00px;font-size:11.5px;letter-spacing:0.281px;color:#333;">Separator</div>
<div class="tx" id="t_it9" style="left:23.84px;top:486.01px;font-size:11.5px;letter-spacing:0.600px;color:#333;">Step</div>
<div class="tx" id="t_ctree" style="left:48.16px;top:533.01px;font-size:12.8px;letter-spacing:0.318px;color:#2b2b2b;">Component Tree</div>
<div class="tx" id="t_root" style="left:48.21px;top:574.00px;font-size:11.2px;letter-spacing:-0.210px;color:#222;-webkit-text-stroke:.15px #222;">Root</div>
<div class="tx" id="t_page" style="left:60.05px;top:606.00px;font-size:11.2px;letter-spacing:0.270px;color:#222;-webkit-text-stroke:.15px #222;">Page</div>
<div class="tx" id="t_text" style="left:73.53px;top:638.01px;font-size:11.2px;letter-spacing:-0.090px;color:#222;-webkit-text-stroke:.15px #222;">Text</div>
<div class="tx" id="t_dot" style="left:98.30px;top:638.00px;font-size:11px;letter-spacing:0.000px;color:#8e8e8e;">·</div>
<div class="tx" id="t_jp" style="left:104.68px;top:638.00px;font-size:11px;letter-spacing:0.225px;color:#8e8e8e;">こんにちは</div>
<div class="tx" id="t_ced" style="left:798.63px;top:137.02px;font-size:12.8px;letter-spacing:0.297px;color:#2b2b2b;">Code Editor</div>
<div class="tx" id="t_save" style="left:798.00px;top:195.02px;font-size:12px;letter-spacing:0.213px;color:#2b2b2b;">Save and run</div>
<div class="tx" id="t_log" style="left:795.00px;top:625.01px;font-size:12.8px;letter-spacing:0.225px;color:#2b2b2b;">Log</div>
<div class="tx" id="t_stdout" style="left:821.42px;top:673.01px;font-size:13px;letter-spacing:0.314px;color:#8c8c8c;">Stdout message during initialisation</div>
<div class="tx" id="t_hello" style="left:821.42px;top:693.00px;font-size:13px;letter-spacing:0.303px;color:#2b2b2b;">Hello world!</div>
<div class="tx" id="t_time" style="left:1426.26px;top:673.00px;font-size:13px;letter-spacing:0.077px;color:#8c8c8c;">13:08:01</div>
</div></div>

</body>
</html>
